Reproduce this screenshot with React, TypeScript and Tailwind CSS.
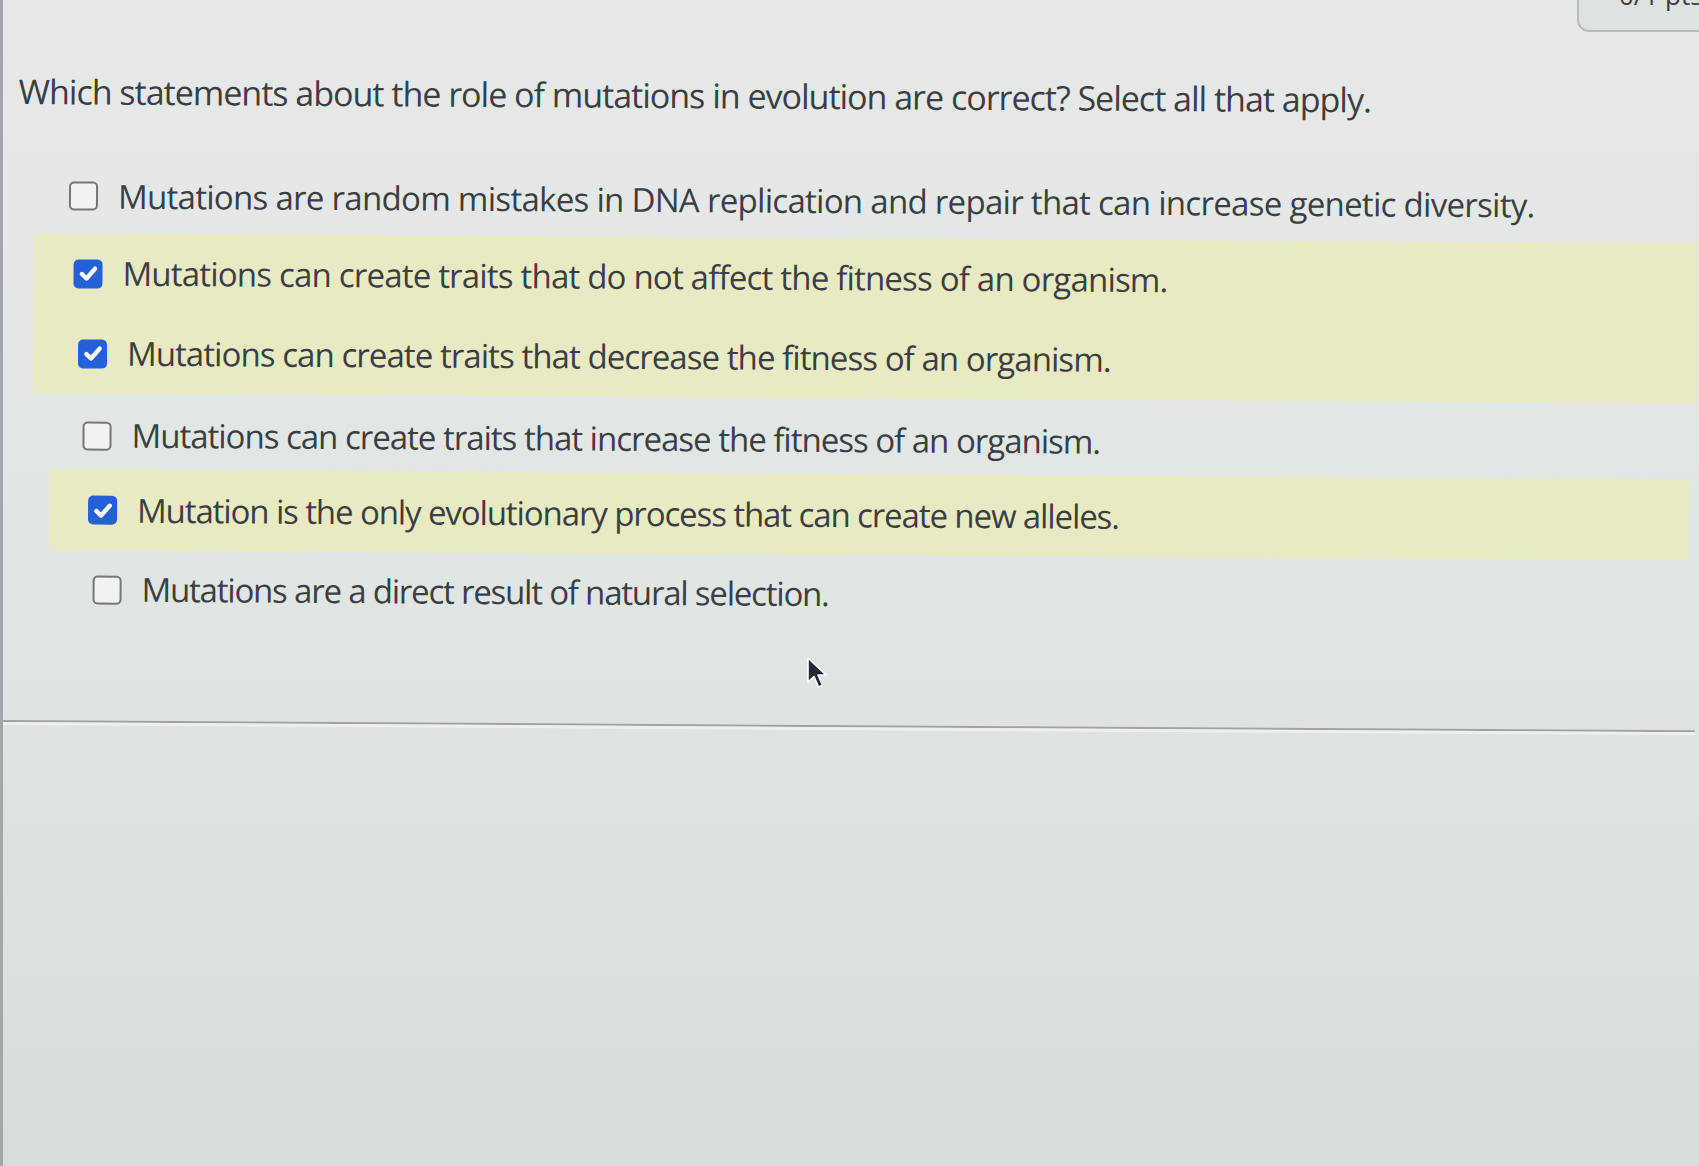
import React from "react";

type Option = {
  text: string;
  checked: boolean;
  indent: string;
  height: string;
  tracking: string;
};

// photo perspective: rows drift right and tighten slightly going down
const options: Option[] = [
  {
    text: "Mutations are random mistakes in DNA replication and repair that can increase genetic diversity.",
    checked: false,
    indent: "pl-[67px]",
    height: "h-[75px]",
    tracking: "tracking-[-0.7px]",
  },
  {
    text: "Mutations can create traits that do not affect the fitness of an organism.",
    checked: true,
    indent: "pl-[40px]",
    height: "h-[80px]",
    tracking: "tracking-[-0.8px]",
  },
  {
    text: "Mutations can create traits that decrease the fitness of an organism.",
    checked: true,
    indent: "pl-[45px]",
    height: "h-[80px]",
    tracking: "tracking-[-0.93px]",
  },
  {
    text: "Mutations can create traits that increase the fitness of an organism.",
    checked: false,
    indent: "pl-[82px] pt-[8px]",
    height: "h-[76px]",
    tracking: "tracking-[-1px]",
  },
  {
    text: "Mutation is the only evolutionary process that can create new alleles.",
    checked: true,
    indent: "pl-[39px]",
    height: "h-[81px]",
    tracking: "tracking-[-1.1px]",
  },
  {
    text: "Mutations are a direct result of natural selection.",
    checked: false,
    indent: "pl-[93px]",
    height: "h-[78px]",
    tracking: "tracking-[-1.2px]",
  },
];

function Checkbox({ checked }: { checked: boolean }) {
  if (checked) {
    return (
      <span className="flex h-[29px] w-[29px] shrink-0 items-center justify-center rounded-[5px] bg-[#2461d8]">
        <svg width="22" height="22" viewBox="0 0 20 20" fill="none">
          <path
            d="M4 10.5 L8.2 14.5 L16 5.5"
            stroke="#ffffff"
            strokeWidth="4"
            strokeLinecap="round"
            strokeLinejoin="round"
          />
        </svg>
      </span>
    );
  }
  return (
    <span className="h-[29px] w-[29px] shrink-0 rounded-[5px] border-[2.5px] border-[#74777a] bg-[#f1f2f2]" />
  );
}

function Row({ o }: { o: Option }) {
  return (
    <div className={`flex items-center gap-[20px] ${o.height} ${o.indent}`}>
      <Checkbox checked={o.checked} />
      <span className={`whitespace-nowrap ${o.tracking}`}>{o.text}</span>
    </div>
  );
}

export default function App() {
  const [first, second, third, fourth, fifth, sixth] = options;
  return (
    <div className="relative min-h-screen overflow-hidden border-l-[3px] border-[#a4a7a9] bg-gradient-to-b from-[#e6e9e8] via-[#e1e5e4] to-[#d8dcdd] font-['Open_Sans',sans-serif] text-[#3b3e43]">
      {/* score pill, mostly scrolled off the top edge */}
      <div className="flex justify-end">
        <div className="-mt-[14px] -mr-[30px] flex h-[46px] w-[152px] items-start rounded-bl-[12px] rounded-br-[12px] border-2 border-[#b8bbbd] bg-[#dfe2e3] pl-[40px] text-[26px] leading-[14px] text-[#3a3d42]">
          0/1 pts
        </div>
      </div>

      <div className="origin-top-left rotate-[0.35deg]">
        <div className="h-[126px] pl-[16px] pt-[36px] text-[34px] leading-[46px] tracking-[-1px]">
          Which statements about the role of mutations in evolution are correct? Select all that apply.
        </div>

        <div className="text-[33px]">
          <Row o={first} />
          <div className="ml-[32px] bg-[#e8eac1]">
            <Row o={second} />
            <Row o={third} />
          </div>
          <Row o={fourth} />
          <div className="ml-[49px] mr-[7px] bg-[#e8eac1]">
            <Row o={fifth} />
          </div>
          <Row o={sixth} />
        </div>

        <div className="h-[94px] border-b-2 border-[#9fa3a6]" />
        <div className="h-[3px] bg-[#eef0f0]" />
      </div>

      {/* mouse pointer */}
      <svg
        className="absolute left-[803px] top-[656px]"
        width="24"
        height="36"
        viewBox="0 0 24 36"
      >
        <path
          d="M2 2 L2 26 L8 20.5 L12.5 31 L16.5 29.2 L12 19 L20 19 Z"
          fill="#262a36"
          stroke="#ffffff"
          strokeWidth="1.6"
          strokeLinejoin="round"
        />
      </svg>
    </div>
  );
}
